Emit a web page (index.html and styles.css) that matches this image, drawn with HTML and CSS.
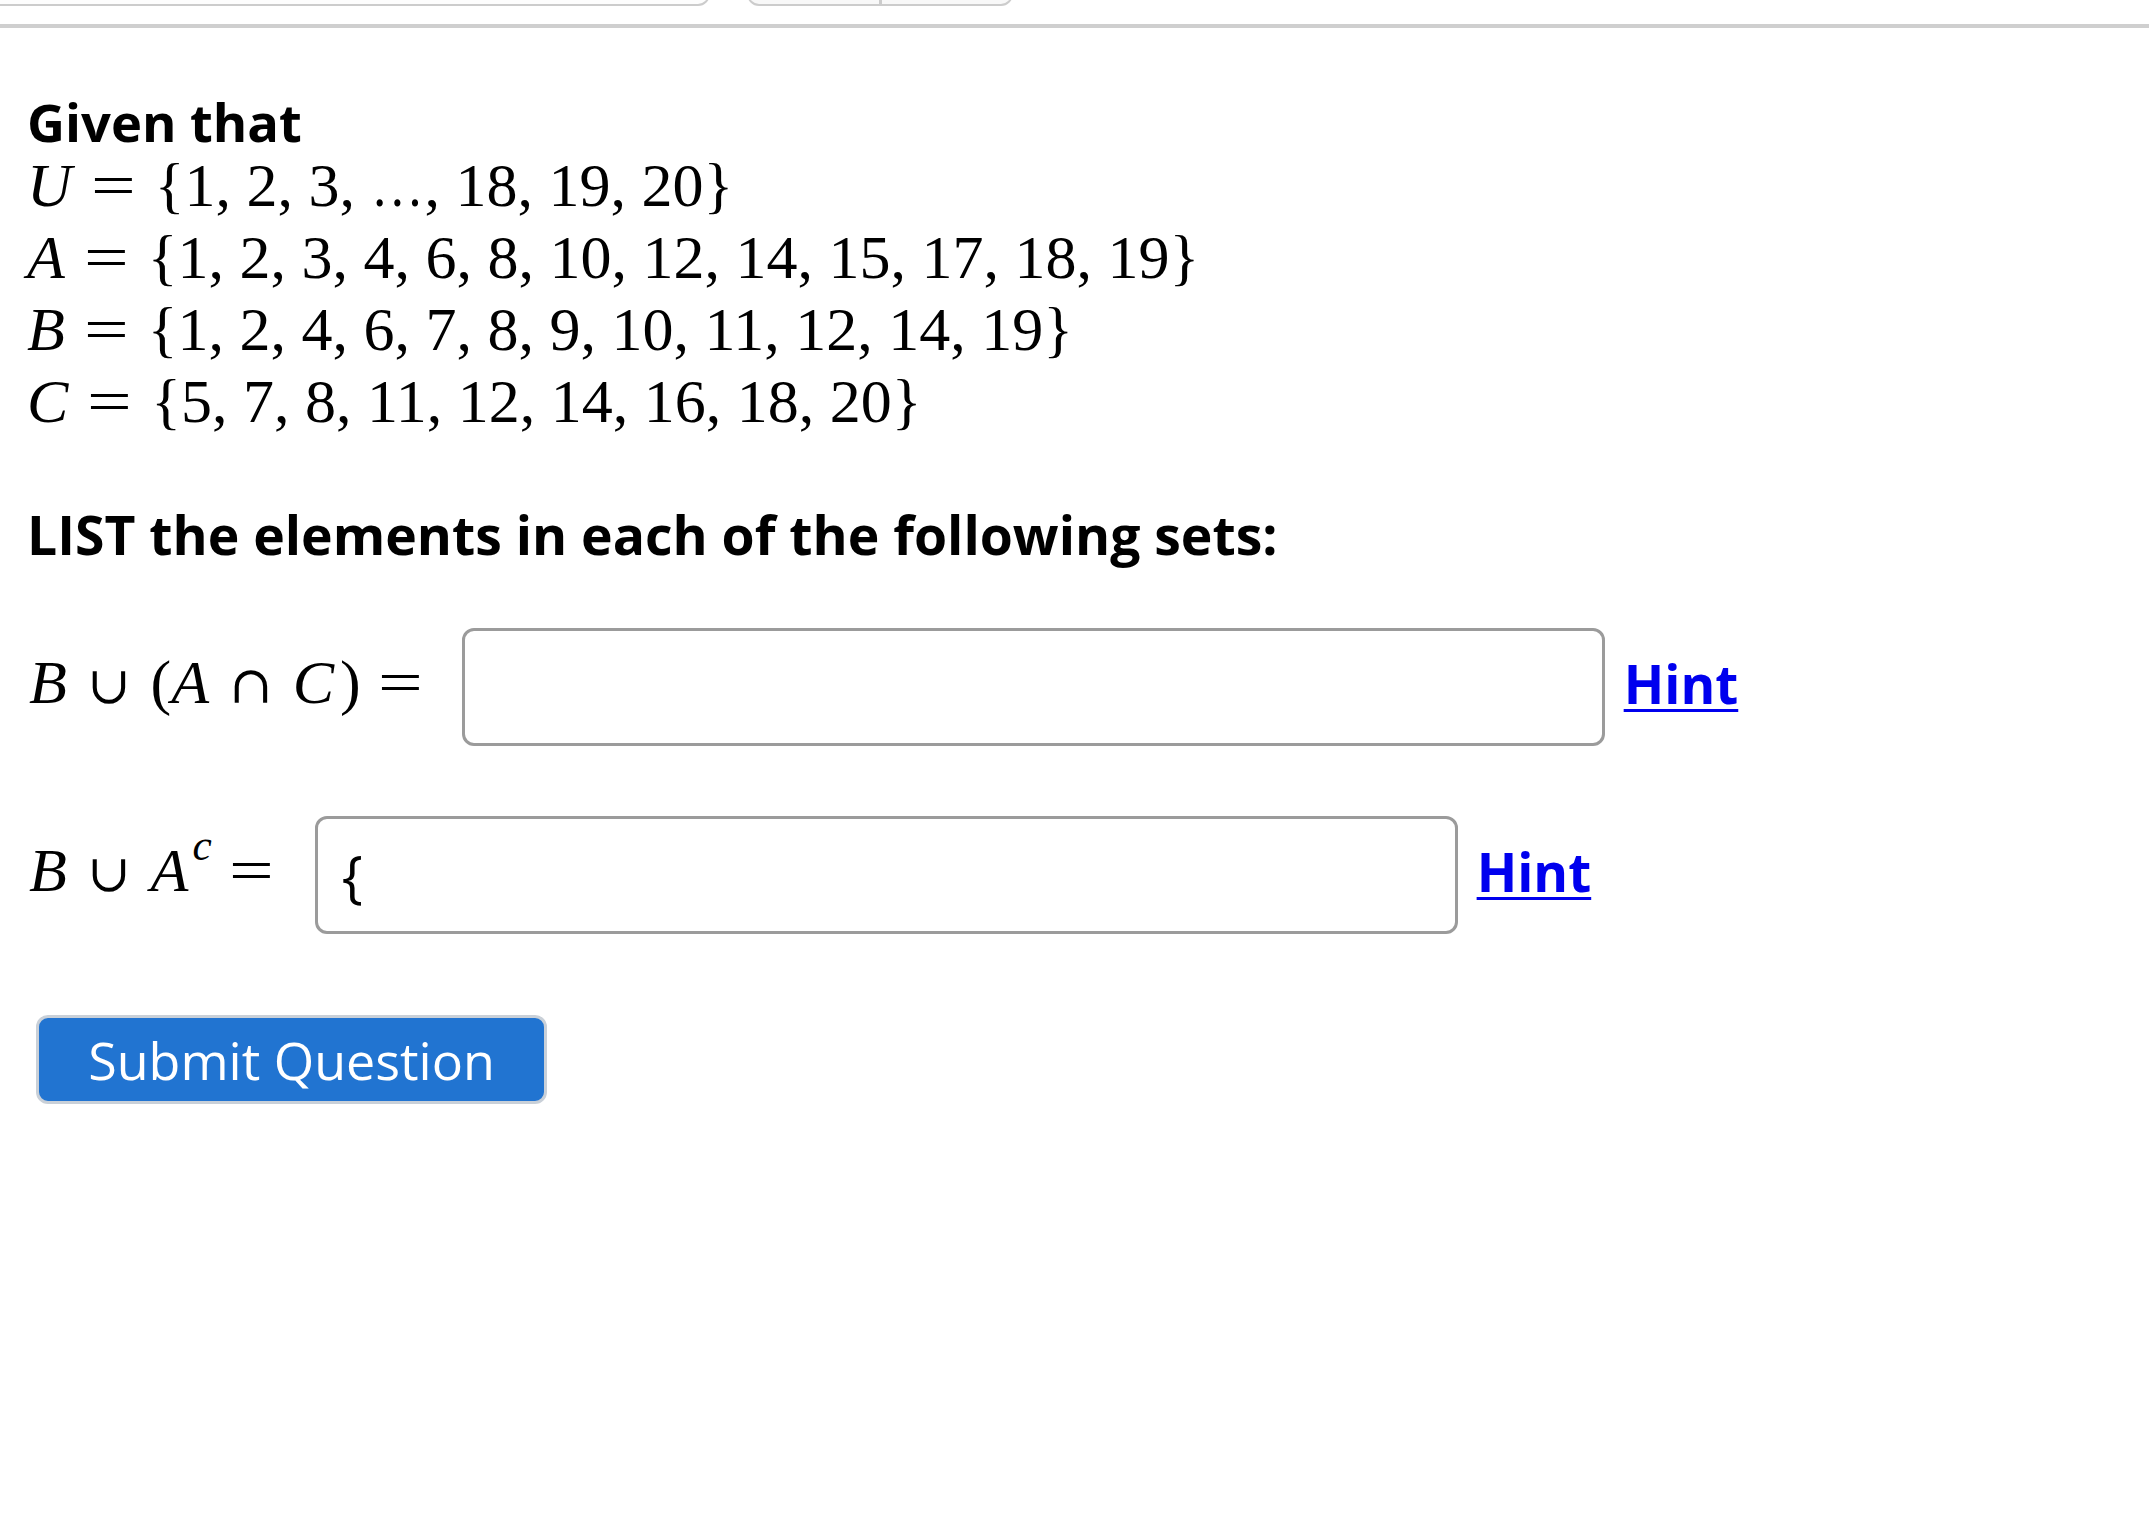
FILE: index.html
```html
<!DOCTYPE html>
<html lang="en">
<head>
<meta charset="utf-8">
<title>Sets question</title>
<link rel="stylesheet" href="styles.css">
</head>
<body>
<div class="toolbar">
  <div class="tb-field"></div>
  <div class="tb-group">
    <div class="tb-btn"></div>
    <div class="tb-btn"></div>
  </div>
</div>
<main class="question">
  <p class="given">Given that</p>
  <div class="sets">
    <div class="set-row"><span class="mi">U</span><span class="mrel">=</span><span class="mb">{</span>1, 2, 3, <span class="ell">…</span>, 18, 19, 20<span class="mb">}</span></div>
    <div class="set-row"><span class="mi">A</span><span class="mrel">=</span><span class="mb">{</span>1, 2, 3, 4, 6, 8, 10, 12, 14, 15, 17, 18, 19<span class="mb">}</span></div>
    <div class="set-row"><span class="mi">B</span><span class="mrel">=</span><span class="mb">{</span>1, 2, 4, 6, 7, 8, 9, 10, 11, 12, 14, 19<span class="mb">}</span></div>
    <div class="set-row"><span class="mi">C</span><span class="mrel">=</span><span class="mb">{</span>5, 7, 8, 11, 12, 14, 16, 18, 20<span class="mb">}</span></div>
  </div>
  <p class="instruct">LIST the elements in each of the following sets:</p>
  <div class="answer-row">
    <span class="math math-1"><span class="mi">B</span><span class="mbin">∪</span><span class="mo">(</span><span class="mi">A</span><span class="mbin">∩</span><span class="mi">C</span><span class="mo mclose">)</span><span class="mrel">=</span></span>
    <input class="answer" type="text" value="">
    <a class="hint" href="#">Hint</a>
  </div>
  <div class="answer-row">
    <span class="math math-2"><span class="mi">B</span><span class="mbin">∪</span><span class="mi">A</span><sup class="msup">c</sup><span class="mrel">=</span></span>
    <input class="answer" type="text" value="{">
    <a class="hint" href="#">Hint</a>
  </div>
  <button class="submit" type="button">Submit Question</button>
</main>
</body>
</html>
```
FILE: styles.css
```css
html, body {
  margin: 0;
  padding: 0;
  background: #ffffff;
}

body {
  font-family: "Open Sans", "Liberation Sans", sans-serif;
  color: #000000;
}

/* top toolbar (cut off at the top edge) */
.toolbar {
  display: flex;
  align-items: flex-start;
  gap: 37px;
  height: 24px;
  border-bottom: 4px solid #cfcfcf;
  overflow: hidden;
}

.tb-field {
  box-sizing: border-box;
  width: 730px;
  height: 32px;
  margin-top: -26px;
  margin-left: -20px;
  border: 2px solid #cccccc;
  border-radius: 12px;
  background: #fdfdfd;
}

.tb-group {
  box-sizing: border-box;
  display: flex;
  width: 266px;
  height: 32px;
  margin-top: -26px;
  border: 2px solid #cccccc;
  border-radius: 12px;
  background: #f8f8f8;
  overflow: hidden;
}

.tb-btn {
  flex: 1;
}

.tb-btn + .tb-btn {
  border-left: 3px solid #cccccc;
}

/* question body */
.question {
  padding-left: 27px;
}

.given {
  margin: 67px 0 0 0;
  font-size: 52.5px;
  line-height: 54px;
  font-weight: 700;
}

.sets {
  font-family: "Liberation Serif", "DejaVu Serif", serif;
  font-size: 62px;
  line-height: 72px;
}

.set-row {
  white-space: nowrap;
}

.mi {
  font-style: italic;
}

.ell {
  display: inline-block;
  margin-right: -8px;
  transform: scaleX(0.85);
  transform-origin: left center;
}

.mrel {
  display: inline-block;
  margin: 0 24px;
  transform: scaleX(1.28);
}

.mbin {
  margin: 0 20px;
  font-family: "DejaVu Serif", "Liberation Serif", serif;
  font-size: 0.84em;
  font-weight: 300;
}

.mclose {
  margin-left: 6px;
}

.msup {
  font-family: "Liberation Serif", serif;
  font-style: italic;
  font-size: 0.7em;
  vertical-align: 0.7em;
  line-height: 0;
  margin-left: 4px;
}

.instruct {
  margin: 71px 0 0 0;
  font-size: 53.5px;
  line-height: 53px;
  font-weight: 700;
}

.answer-row {
  display: flex;
  align-items: center;
  margin-top: 67px;
}

.answer-row + .answer-row {
  margin-top: 70px;
}

.math {
  font-family: "Liberation Serif", "DejaVu Serif", serif;
  font-size: 62px;
  line-height: 72px;
  padding-bottom: 8px;
  margin-left: 2px;
  white-space: nowrap;
}

.math .mrel {
  margin-left: 22px;
  margin-right: 0;
}

.math-1 {
  margin-right: 44px;
}

.math-2 {
  margin-right: 46px;
}

.answer {
  box-sizing: border-box;
  width: 1143px;
  height: 118px;
  border: 3px solid #9b9b9b;
  border-radius: 12px;
  padding: 0 20px 0 24px;
  font-family: "Open Sans", sans-serif;
  font-size: 56px;
  color: #000000;
  background: #ffffff;
  outline: none;
}

.hint {
  margin-left: 19px;
  padding-bottom: 6px;
  font-size: 53px;
  line-height: 60px;
  font-weight: 700;
  color: #0000ee;
  text-decoration: underline;
  text-decoration-thickness: 3px;
  text-underline-offset: 5px;
}

.submit {
  display: block;
  box-sizing: border-box;
  width: 511px;
  height: 89px;
  margin: 81px 0 0 9px;
  padding: 0;
  border: 3px solid #c9d0d8;
  border-radius: 12px;
  background: #2174d1;
  color: #ffffff;
  font-family: "Open Sans", sans-serif;
  font-size: 52px;
  font-weight: 500;
  cursor: pointer;
}
```
